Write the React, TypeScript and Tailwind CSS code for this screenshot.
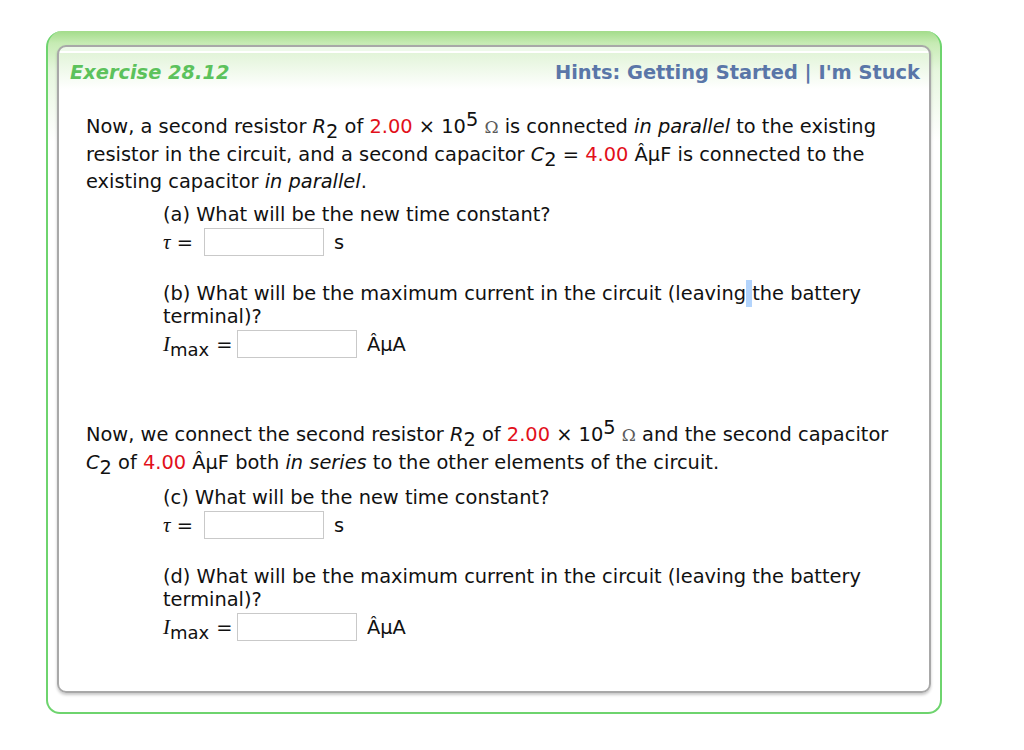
import React from "react";

const red = "text-[#e2101b]";

function Var({ n, i }: { n: string; i: string }) {
  return (
    <span className="whitespace-nowrap">
      <i>{n}</i>
      <span className="relative top-[5px]">{i}</span>
    </span>
  );
}

function Pow() {
  return (
    <span className="whitespace-nowrap">
      10<span className="relative -top-[7px]">5</span>
    </span>
  );
}

function Ohm() {
  return <span className="font-['DejaVu_Serif',serif] text-[#5a5a5a] text-[17px]">Ω</span>;
}

function Box() {
  return <span className="inline-block shrink-0 w-[120px] h-[28px] border border-[#c9c9c9] bg-white" />;
}

function TauRow() {
  return (
    <div className="flex items-center h-[28px] mt-[2px]">
      <span className="w-[41px] shrink-0 whitespace-nowrap">
        <i className="font-['Liberation_Serif',serif] text-[21px]">τ</i> =
      </span>
      <Box />
      <span className="ml-[10px]">s</span>
    </div>
  );
}

function ImaxRow() {
  return (
    <div className="flex items-center h-[28px] mt-[2px]">
      <span className="w-[74px] shrink-0 whitespace-nowrap">
        <i className="font-['Liberation_Serif',serif] text-[21px]">I</i>
        <span className="relative top-[5px] text-[18px]">max</span>
        <span className="ml-[7px]">=</span>
      </span>
      <Box />
      <span className="ml-[10px]">ÂµA</span>
    </div>
  );
}

export default function App() {
  return (
    <div className="min-h-[750px] bg-white pt-[31px] pl-[46px] font-['DejaVu_Sans',Verdana,sans-serif] text-[19.4px] text-[#111]">
      <div className="w-[896px] rounded-t-[16px] rounded-b-[14px] border-x-2 border-b-2 border-[#6ed46e] bg-[linear-gradient(to_bottom,#a3dc8a_0px,#c6ebb3_12px,#e6f6de_40px,#fff_110px)] px-[9px] pt-[14px] pb-[19px]">
        <div className="h-[648px] rounded-[9px] border-2 border-[#a8a8a8] shadow-[0_2px_3px_rgba(0,0,0,0.22)] bg-[linear-gradient(to_bottom,#eef9ea_0px,#eef9ea_4px,#fff_4px,#fff_6px,#e2f4d9_6px,#fff_42px)]">
          {/* header */}
          <div className="h-[44px] flex items-center justify-between pl-[11px] pr-[9px] pt-[8px] font-bold">
            <span className="italic text-[#5cc25c]">Exercise 28.12</span>
            <span className="text-[#5a76a8]">Hints: Getting Started | I'm Stuck</span>
          </div>

          <div className="pl-[27px] pt-[22px]">
            <p className="leading-[27px] w-[820px]">
              Now, a second resistor <Var n="R" i="2" /> of <span className={red}>2.00</span> × <Pow /> <Ohm /> is
              connected <i>in parallel</i> to the existing resistor in the circuit, and a second capacitor{" "}
              <Var n="C" i="2" /> = <span className={red}>4.00</span> ÂµF is connected to the existing capacitor{" "}
              <i>in parallel</i>.
            </p>

            <div className="ml-[77px] mt-[8px] leading-[23px]">
              <p>(a) What will be the new time constant?</p>
              <TauRow />

              <p className="mt-[26px] w-[730px]">
                (b) What will be the maximum current in the circuit (leaving
                <span className="bg-[#b3d4fc] py-[2px]"> </span>the battery terminal)?
              </p>
              <ImaxRow />
            </div>

            <p className="leading-[27px] w-[820px] mt-[63px]">
              Now, we connect the second resistor <Var n="R" i="2" /> of <span className={red}>2.00</span> × <Pow />{" "}
              <Ohm /> and the second capacitor <Var n="C" i="2" /> of <span className={red}>4.00</span> ÂµF both{" "}
              <i>in series</i> to the other elements of the circuit.
            </p>

            <div className="ml-[77px] mt-[10px] leading-[23px]">
              <p>(c) What will be the new time constant?</p>
              <TauRow />

              <p className="mt-[26px] w-[730px]">
                (d) What will be the maximum current in the circuit (leaving the battery terminal)?
              </p>
              <ImaxRow />
            </div>
          </div>
        </div>
      </div>
    </div>
  );
}
